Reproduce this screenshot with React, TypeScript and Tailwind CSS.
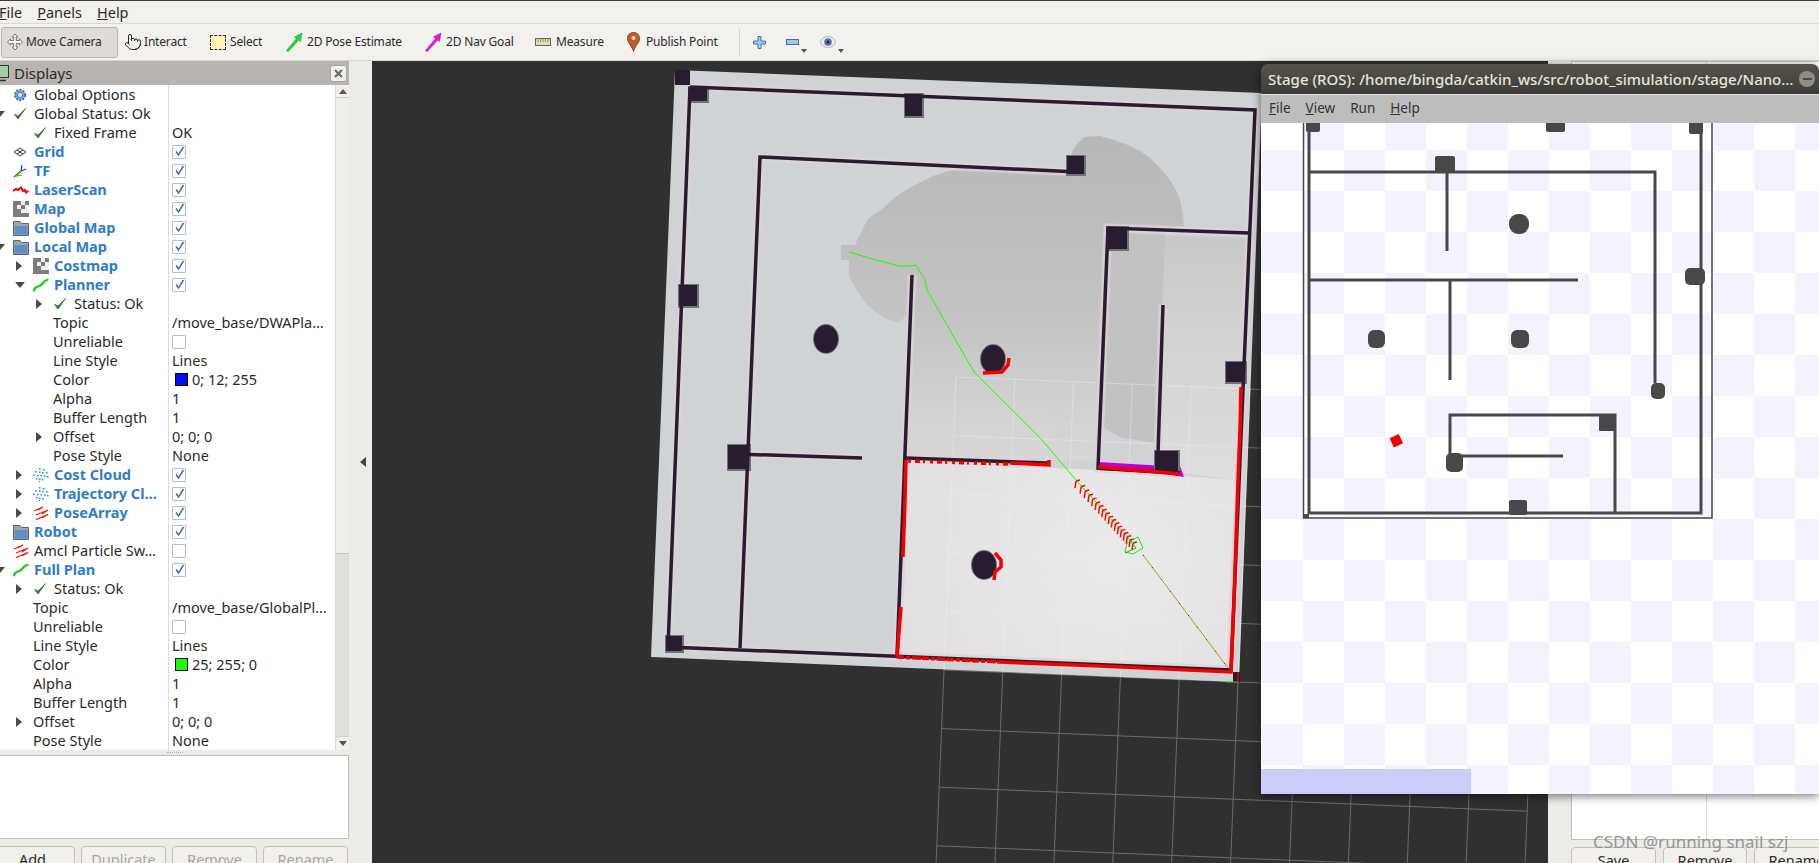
import { Pointer } from "lucide-react";

type Row = {
  text: string;
  level: number;
  arrow?: "right" | "down" | "dot";
  icon?: string;
  blue?: boolean;
  value?: string;
  check?: boolean;
  color?: string;
};

const rows: Row[] = [
  { text: "Global Options", level: 0, arrow: "dot", icon: "gear" },
  { text: "Global Status: Ok", level: 0, arrow: "down", icon: "ok" },
  { text: "Fixed Frame", level: 1, icon: "ok", value: "OK" },
  { text: "Grid", level: 0, arrow: "dot", icon: "grid", blue: true, check: true },
  { text: "TF", level: 0, arrow: "dot", icon: "tf", blue: true, check: true },
  { text: "LaserScan", level: 0, arrow: "dot", icon: "laser", blue: true, check: true },
  { text: "Map", level: 0, arrow: "dot", icon: "map", blue: true, check: true },
  { text: "Global Map", level: 0, arrow: "dot", icon: "folder", blue: true, check: true },
  { text: "Local Map", level: 0, arrow: "down", icon: "folder", blue: true, check: true },
  { text: "Costmap", level: 1, arrow: "right", icon: "map", blue: true, check: true },
  { text: "Planner", level: 1, arrow: "down", icon: "path", blue: true, check: true },
  { text: "Status: Ok", level: 2, arrow: "right", icon: "ok" },
  { text: "Topic", level: 2, value: "/move_base/DWAPla…" },
  { text: "Unreliable", level: 2, check: false },
  { text: "Line Style", level: 2, value: "Lines" },
  { text: "Color", level: 2, value: "0; 12; 255", color: "bg-[#000cff]" },
  { text: "Alpha", level: 2, value: "1" },
  { text: "Buffer Length", level: 2, value: "1" },
  { text: "Offset", level: 2, arrow: "right", value: "0; 0; 0" },
  { text: "Pose Style", level: 2, value: "None" },
  { text: "Cost Cloud", level: 1, arrow: "right", icon: "cloud", blue: true, check: true },
  { text: "Trajectory Cl…", level: 1, arrow: "right", icon: "cloud", blue: true, check: true },
  { text: "PoseArray", level: 1, arrow: "right", icon: "pose", blue: true, check: true },
  { text: "Robot", level: 0, arrow: "dot", icon: "folder", blue: true, check: true },
  { text: "Amcl Particle Sw…", level: 0, arrow: "dot", icon: "pose", check: false },
  { text: "Full Plan", level: 0, arrow: "down", icon: "path", blue: true, check: true },
  { text: "Status: Ok", level: 1, arrow: "right", icon: "ok" },
  { text: "Topic", level: 1, value: "/move_base/GlobalPl…" },
  { text: "Unreliable", level: 1, check: false },
  { text: "Line Style", level: 1, value: "Lines" },
  { text: "Color", level: 1, value: "25; 255; 0", color: "bg-[#19ff00]" },
  { text: "Alpha", level: 1, value: "1" },
  { text: "Buffer Length", level: 1, value: "1" },
  { text: "Offset", level: 1, arrow: "right", value: "0; 0; 0" },
  { text: "Pose Style", level: 1, value: "None" },
];

const levelClass = ["ml-[-9px]", "ml-[11px]", "ml-[31px]"];

function TreeIcon({ name }: { name: string }) {
  if (name === "ok")
    return (
      <svg width="14" height="14" viewBox="0 0 14 14">
        <path d="M1.5 7.5 L5 12 L12.5 1.5 L5.2 9 Z" fill="#2a7a2c" stroke="#2a7a2c" strokeWidth="0.8" />
      </svg>
    );
  if (name === "gear")
    return (
      <svg width="14" height="14" viewBox="0 0 14 14">
        <circle cx="7" cy="7" r="5" fill="#8fb4e3" stroke="#3f78c4" strokeWidth="2.4" strokeDasharray="2 1.2" />
        <circle cx="7" cy="7" r="2.6" fill="#dfe9f6" stroke="#3f78c4" strokeWidth="1" />
      </svg>
    );
  if (name === "grid")
    return (
      <svg width="14" height="14" viewBox="0 0 14 14" fill="none" stroke="#3d3d3d" strokeWidth="1">
        <path d="M7 3 L13 7 L7 11 L1 7 Z M4 5 L10 9 M10 5 L4 9" />
      </svg>
    );
  if (name === "tf")
    return (
      <svg width="14" height="14" viewBox="0 0 14 14" fill="none" strokeWidth="1.2">
        <path d="M8 7 L1 13" stroke="#ee1111" />
        <path d="M8 7 L4 12 L9 11" stroke="#11dd11" />
        <path d="M8 7 L9 1 M8 7 L13 5" stroke="#2222dd" />
      </svg>
    );
  if (name === "laser")
    return (
      <svg width="16" height="14" viewBox="0 0 16 14" fill="none" stroke="#f00000" strokeWidth="2">
        <path d="M0 8 L3 6 L5 7 L8 4.5 L10 8 L12 7 L13 9.5 L15.5 8" />
      </svg>
    );
  if (name === "map")
    return (
      <svg width="16" height="16" viewBox="0 0 16 16">
        <rect width="16" height="16" fill="#f0f0f0" />
        <path d="M0 0h8v4h-8z M12 0h4v4h-4z M0 4h4v4h-4z M8 4h4v4h-4z M0 8h8v4h-8z M0 12h8v4h-8z M8 12h8v4h-8z" fill="#7c7c7c" />
      </svg>
    );
  if (name === "folder")
    return (
      <svg width="16" height="16" viewBox="0 0 16 16">
        <path d="M0.5 1.5 H7 L8.5 3.5 H15.5 V15.5 H0.5 Z" fill="#9aa4ad" stroke="#5c6670" />
        <rect x="1.5" y="6" width="13" height="8.5" fill="#5c8fc9" />
      </svg>
    );
  if (name === "path")
    return (
      <svg width="16" height="14" viewBox="0 0 16 14" fill="none" stroke="#16d016" strokeWidth="2.2" strokeLinecap="round">
        <path d="M1 12.5 C2 7 6 10 9 6 C10.5 4 12 2.5 14.5 1.8" />
      </svg>
    );
  if (name === "cloud")
    return (
      <svg width="16" height="14" viewBox="0 0 16 14" fill="#1b8fe8">
        <path d="M6 0h1.6v1.6H6z M10 1h1.6v1.6H10z M2 3h1.6v1.6H2z M6 3.5h1.6v1.6H6z M9 4h1.6v1.6H9z M13 4h1.6v1.6H13z M0 6.500h1.6v1.6H0z M4 7h1.6v1.600H4z M7.500 7h1.6v1.6h-1.6z M11 7.500h1.6v1.600H11z M14 8h1.600v1.600H14z M3 10h1.600v1.600H3z M6 10.500h1.600v1.600H6z M9 11h1.600v1.600H9z M6 13h1v1H6z" />
      </svg>
    );
  return (
    <svg width="16" height="14" viewBox="0 0 16 14" fill="none" stroke="#ee1c10" strokeWidth="1.3">
      <path d="M1 5 L10 1 L5 4 M3 9 L15 4 L9 8 M3 13.500 L15 8.500 L9 12" />
    </svg>
  );
}

function Arrow({ kind }: { kind?: Row["arrow"] }) {
  if (kind === "right")
    return <span className="ml-[5px] h-0 w-0 border-y-[5px] border-l-[6px] border-y-transparent border-l-[#4a4a4a]" />;
  if (kind === "down")
    return <span className="ml-[4px] h-0 w-0 border-x-[5px] border-t-[6px] border-x-transparent border-t-[#4a4a4a]" />;
  if (kind === "dot") return <span className="ml-[7px] h-[2px] w-[2px] bg-[#777]" />;
  return null;
}

function CheckBox({ on }: { on: boolean }) {
  return (
    <span className="flex h-[14px] w-[14px] items-center justify-center rounded-[1px] border border-[#bdbdbd] bg-white">
      {on && (
        <svg width="11" height="11" viewBox="0 0 11 11" fill="none" stroke="#2f73b8" strokeWidth="1.5">
          <path d="M2 5.500 L4.500 9 L9.500 1" />
        </svg>
      )}
    </span>
  );
}

function TreeRow({ row }: { row: Row }) {
  return (
    <div className="flex h-[19px] shrink-0 items-center">
      <div className="flex h-full w-[169px] shrink-0 items-center overflow-hidden border-r border-[#dcdcdc]">
        <div className={`flex shrink-0 items-center ${levelClass[row.level]}`}>
          <span className="flex w-[22px] shrink-0 items-center">
            <Arrow kind={row.arrow} />
          </span>
          {row.icon && (
            <span className="flex w-[21px] shrink-0 items-center">
              <TreeIcon name={row.icon} />
            </span>
          )}
          <span className={`whitespace-nowrap ${row.blue ? "font-bold text-[#2f7ccb]" : "text-[#2b2b2b]"}`}>{row.text}</span>
        </div>
      </div>
      <div className="flex items-center whitespace-nowrap pl-[3px] text-[#2b2b2b]">
        {row.check !== undefined && <CheckBox on={row.check} />}
        {row.color && <span className={`ml-[3px] mr-[4px] h-[13px] w-[13px] border border-black ${row.color}`} />}
        {row.value}
      </div>
    </div>
  );
}

function PanelButton({ label, width, disabled }: { label: string; width: string; disabled?: boolean }) {
  return (
    <div
      className={`flex h-[27px] shrink-0 items-center justify-center rounded-[4px] border border-[#c4c1bc] bg-[#f2f0ed] ${width} ${disabled ? "text-[#a8a6a2]" : "text-[#2b2b2b]"}`}
    >
      {label}
    </div>
  );
}

function Tool({ width, icon, label }: { width: string; icon: React.ReactNode; label: string }) {
  return (
    <div className={`flex shrink-0 items-center ${width}`}>
      {icon}
      <span className="whitespace-nowrap text-[12px] tracking-[-0.18px] text-[#2b2b2b]">{label}</span>
    </div>
  );
}

function ArrowIcon({ color, dark }: { color: string; dark: string }) {
  return (
    <svg className="mr-[4px]" width="17" height="20" viewBox="0 0 17 20">
      <path d="M0.500 18.500 L10.500 6.500 L8.500 5 L16 1 L14.500 9.500 L12.800 8 L2 19.800 Z" fill={color} stroke={dark} strokeWidth="0.5" />
    </svg>
  );
}

const gridLines = (() => {
  const lines: number[][] = [];
  const p = (i: number, j: number) => [956 + i * 58.8 - j * 2.4, 377 + i * 2.4 + j * 58.6];
  for (let i = 0; i <= 10; i++) lines.push([...p(i, 0), ...p(i, 10)]);
  for (let j = 0; j <= 10; j++) lines.push([...p(0, j), ...p(10, j)]);
  return lines;
})();

const walls = [
  "690,87 1255,110 1231,670 668,647 690,87",
  "740,648 760,157 1078,172",
  "912,275 897,657",
  "905,458 1048,463",
  "736,454 862,458",
  "1249,233 1108,228 1098,468 1180,473",
  "1163,305 1158,453",
];

const blocks = [
  [689, 87, 18, 14],
  [905, 94, 17, 22],
  [1067, 156, 17, 18],
  [679, 285, 18, 21],
  [1107, 227, 20, 22],
  [1226, 362, 19, 20],
  [728, 445, 21, 24],
  [1155, 451, 23, 20],
  [666, 636, 16, 15],
];

const rounds = [
  [826, 339, 12, 14],
  [993, 359, 12, 14],
  [984, 565, 12, 14],
];

const redLines = [
  "1241,387 1240,430 1238,480 1236,540 1234,600 1231,672 1100,666 1000,662",
  "901,607 897,657",
  "906,460 905,500 903,557",
  "1010,463 1049,465 1049,460",
  "1098,467 1180,474",
  "1009,358 1008,365 1002,372 983,373",
  "995,553 1001,560 1001,567 995,572 994,580",
];

const stageWalls = [
  "1309,123 1309,513 1701,513 1701,123",
  "1309,172 1655,172 1655,383",
  "1447,172 1447,251",
  "1309,280 1578,280",
  "1450,280 1450,380",
  "1450,457 1450,415 1615,415 1615,513",
  "1450,456 1563,456",
];

const stageBlocks = [
  [1306, 120, 14, 12, 2],
  [1546, 120, 19, 12, 2],
  [1689, 120, 14, 14, 2],
  [1435, 156, 20, 17, 2],
  [1685, 268, 20, 17, 5],
  [1651, 383, 14, 16, 5],
  [1368, 330, 17, 18, 6],
  [1511, 330, 18, 18, 6],
  [1509, 214, 20, 20, 9],
  [1446, 453, 17, 19, 5],
  [1599, 415, 17, 16, 1],
  [1509, 500, 18, 15, 2],
  [1303, 514, 6, 4, 0],
];

function Viewport3D() {
  const ticks = Array.from({ length: 18 }, (_, k) => {
    const t = Math.pow(k / 17, 0.85);
    return [1076 + t * 57, 481 + t * 62];
  });
  return (
    <svg className="block h-full w-full" viewBox="372 61 1176 802" preserveAspectRatio="none">
      <defs>
        <clipPath id="mapClip">
          <polygon points="675,70 1262,93 1239,682 651,657" />
        </clipPath>
        <linearGradient id="blobFill" x1="0" y1="0" x2="0" y2="1">
          <stop offset="0" stopColor="#b8b8b8" />
          <stop offset="0.55" stopColor="#c4c3c4" />
          <stop offset="1" stopColor="#d9d7d8" />
        </linearGradient>
        <linearGradient id="sideFill" x1="0" y1="0" x2="0" y2="1">
          <stop offset="0" stopColor="#c9c8c9" />
          <stop offset="1" stopColor="#e0dfe0" />
        </linearGradient>
        <radialGradient id="lightFill" gradientUnits="userSpaceOnUse" cx="1110" cy="560" r="300">
          <stop offset="0" stopColor="#ebeaeb" />
          <stop offset="0.7" stopColor="#e2e0e1" />
          <stop offset="1" stopColor="#d9d7d8" />
        </radialGradient>
      </defs>
      <rect x="372" y="61" width="1176" height="802" fill="#303030" />
      {gridLines.map((l, i) => (
        <line key={i} x1={l[0]} y1={l[1]} x2={l[2]} y2={l[3]} stroke="#6b6b6b" strokeWidth="1" />
      ))}
      <polygon points="675,70 1262,93 1239,682 651,657" fill="#d0d3d5" />
      <g clipPath="url(#mapClip)">
        <polygon
          points="841,245 855,245 858,238 861,233 867,220 873,215 881,210 891,201 901,193 911,187 921,182 933,176 945,172 961,168 1066,170 1072,152 1077,144 1084,137 1100,136 1114,140 1128,145 1140,151 1150,158 1161,169 1170,180 1176,190 1180,200 1183,214 1184,227 1108,228 1100,460 905,458 912,275 907,315 899,323 892,321 885,318 876,312 867,305 862,298 857,290 849,277 849,260 841,260"
          fill="url(#blobFill)"
        />
        <polygon points="1163,235 1250,238 1240,480 1156,470" fill="url(#sideFill)" />
        <polygon points="1108,232 1165,234 1158,443 1122,438 1102,427" fill="#c3c2c3" />
        <polygon points="906,462 1098,470 1180,476 1240,480 1232,670 897,657" fill="url(#lightFill)" />
        {gridLines.map((l, i) => (
          <line key={i} x1={l[0]} y1={l[1]} x2={l[2]} y2={l[3]} stroke="#f2f2f2" strokeWidth="1" opacity="0.4" />
        ))}
        {walls.map((w, i) => (
          <polyline key={i} points={w} fill="none" stroke="#dcd2d5" strokeWidth="9" opacity="0.75" />
        ))}
        <polygon points="1098,462 1165,466 1180,466 1184,477 1165,474 1098,470" fill="#c000c8" />
      </g>
      <rect x="675" y="70" width="15" height="15" fill="#2a1c30" />
      {blocks.map((b, i) => (
        <rect key={i} x={b[0] - 1} y={b[1] - 1} width={b[2] + 3} height={b[3] + 3} fill="#6f7478" />
      ))}
      {rounds.map((r, i) => (
        <ellipse key={i} cx={r[0]} cy={r[1]} rx={r[2] + 1} ry={r[3] + 1} fill="#6f7478" />
      ))}
      {walls.map((w, i) => (
        <polyline key={i} points={w} fill="none" stroke="#2a1c30" strokeWidth="3.500" />
      ))}
      {blocks.map((b, i) => (
        <rect key={i} x={b[0]} y={b[1]} width={b[2]} height={b[3]} fill="#2a1c30" />
      ))}
      {rounds.map((r, i) => (
        <ellipse key={i} cx={r[0]} cy={r[1]} rx={r[2]} ry={r[3]} fill="#2a1c30" />
      ))}
      {redLines.map((w, i) => (
        <polyline key={i} points={w} fill="none" stroke="#f50000" strokeWidth="3.500" />
      ))}
      <polyline points="908,461 1010,464" fill="none" stroke="#f50000" strokeWidth="3.500" strokeDasharray="3 4 5 3 2 5" />
      <polyline points="897,657 1000,662" fill="none" stroke="#f50000" strokeWidth="3.500" strokeDasharray="7 2 4 2 9 1" />
      <polyline
        points="849,252 869,258 899,266 911,266 916,265 925,280 927,290 967,360 975,373 1042,440 1076,480 1132,542"
        fill="none"
        stroke="#19ff00"
        strokeWidth="1"
      />
      {ticks.map((t, i) => (
        <path key={i} d={`M${t[0]} ${t[1]} l-1 7 M${t[0]} ${t[1]} l4 -1`} fill="none" stroke="#f40808" strokeWidth="1.5" />
      ))}
      <polygon points="1127,543 1138,537 1143,548 1133,554 1125,552" fill="none" stroke="#19e010" strokeWidth="1" />
      <polyline points="1125,553 1136,548 1129,539" fill="none" stroke="#10c010" strokeWidth="1" />
      <line x1="1143" y1="555" x2="1228" y2="668" stroke="#a3a33a" strokeWidth="1" />
      <line x1="1143" y1="555" x2="1228" y2="668" stroke="#222" strokeWidth="1" strokeDasharray="1 14" />
      <rect x="1233" y="672" width="7" height="10" fill="#2a1c30" />
      <path d="M1226 682 H1238" stroke="#19e010" strokeWidth="1" />
      <path d="M1238 682 V672" stroke="#f00000" strokeWidth="1.5" />
    </svg>
  );
}

function StageCanvas() {
  const cells: number[][] = [];
  for (let c = -1; c < 14; c++) {
    for (let r = -1; r < 17; r++) {
      if ((c + r) % 2 !== 0) cells.push([1303 + c * 41, 150 + r * 41]);
    }
  }
  return (
    <svg className="block h-[671px] w-full" viewBox="1261 123 558 671" preserveAspectRatio="none">
      <rect x="1261" y="123" width="558" height="671" fill="#ffffff" />
      {cells.map((c, i) => (
        <rect key={i} x={c[0]} y={c[1]} width="41" height="41" fill="#f3f3ff" />
      ))}
      <path d="M1303.500 123 V518 H1712 V123" fill="none" stroke="#484848" strokeWidth="1.500" />
      {stageWalls.map((w, i) => (
        <polyline key={i} points={w} fill="none" stroke="#484848" strokeWidth="3" />
      ))}
      {stageBlocks.map((b, i) => (
        <rect key={i} x={b[0]} y={b[1]} width={b[2]} height={b[3]} rx={b[4]} fill="#484848" />
      ))}
      <rect x="1391.500" y="435.500" width="10" height="10" fill="#f00000" transform="rotate(-25 1397 441)" />
      <rect x="1261" y="769" width="210" height="25" fill="#ccccfa" />
    </svg>
  );
}

export default function App() {
  return (
    <div className="relative flex h-[863px] w-[1819px] flex-col overflow-hidden bg-[#edebe6] font-['Noto_Sans',sans-serif] text-[14.5px] leading-none text-[#2b2b2b]">
      <div className="flex h-[23px] shrink-0 items-center gap-[15px] border-t border-[#3c3b37] bg-[#f2f1ed]">
        <span className="-ml-px"><u>F</u>ile</span>
        <span><u>P</u>anels</span>
        <span><u>H</u>elp</span>
      </div>
      <div className="flex h-[38px] shrink-0 items-center border-y border-[#d9d7d2] bg-[#f2f1ed] pl-px">
        <div className="mr-[6px] flex h-[31px] w-[117px] shrink-0 items-center rounded-[3px] border border-[#b8b6b1] bg-[#dfdcd8] pl-[5px]">
          <svg className="mr-[3px]" width="16" height="18" viewBox="0 0 16 18" fill="#f4f4f4" stroke="#777" strokeWidth="1">
            <path d="M8 1 L11 4 H9.300 V7.500 H12.500 V5.800 L15.500 9 L12.500 12.200 V10.500 H9.300 V14 H11 L8 17 L5 14 H6.700 V10.500 H3.500 V12.200 L0.500 9 L3.500 5.800 V7.500 H6.700 V4 H5 Z" />
          </svg>
          <span className="whitespace-nowrap text-[12px] tracking-[-0.18px]">Move Camera</span>
        </div>
        <Tool width="w-[86px]" label="Interact" icon={<Pointer className="mr-[2px]" size={18} strokeWidth={1.3} color="#222" />} />
        <Tool
          width="w-[76px]"
          label="Select"
          icon={<span className="mr-[4px] h-[15px] w-[16px] border border-dashed border-[#333] bg-[#fbf6b6]" />}
        />
        <Tool width="w-[139px]" label="2D Pose Estimate" icon={<ArrowIcon color="#19e040" dark="#0c8a28" />} />
        <Tool width="w-[110px]" label="2D Nav Goal" icon={<ArrowIcon color="#f010e0" dark="#a008a0" />} />
        <Tool
          width="w-[92px]"
          label="Measure"
          icon={
            <svg className="mr-[5px]" width="16" height="8" viewBox="0 0 16 8">
              <rect x="0.500" y="0.500" width="15" height="7" fill="#e6dcae" stroke="#666" />
              <path d="M3 1v3 M5.500 1v3 M8 1v3 M10.500 1v3 M13 1v3" stroke="#777" strokeWidth="0.8" />
            </svg>
          }
        />
        <Tool
          width="w-[112px]"
          label="Publish Point"
          icon={
            <svg className="mr-[6px]" width="13" height="20" viewBox="0 0 13 20">
              <path d="M6.500 0.500 C10 0.500 12.500 3 12.500 6.500 C12.500 10.500 8 14 6.500 19.500 C5 14 0.500 10.500 0.500 6.500 C0.500 3 3 0.500 6.500 0.500 Z" fill="#c9582a" stroke="#7a4a2a" />
              <circle cx="6.500" cy="6" r="2" fill="#f6d9c0" />
            </svg>
          }
        />
        <span className="mr-[13px] h-[27px] w-px bg-[#d4d2cd]" />
        <svg className="mr-[20px]" width="13" height="13" viewBox="0 0 13 13" fill="#a8c6ea" stroke="#3a74b8">
          <path d="M5 0.500 H8 V5 H12.500 V8 H8 V12.500 H5 V8 H0.500 V5 H5 Z" />
        </svg>
        <svg className="mr-[2px]" width="13" height="6" viewBox="0 0 13 6" fill="#a8c6ea" stroke="#3a74b8">
          <rect x="0.500" y="0.500" width="12" height="5" />
        </svg>
        <span className="mr-[13px] mt-[17px] h-0 w-0 border-x-[3px] border-t-[4px] border-x-transparent border-t-[#555]" />
        <svg className="mr-[2px]" width="16" height="14" viewBox="0 0 16 14">
          <ellipse cx="8" cy="7" rx="7.500" ry="5.500" fill="#e8eaee" stroke="#b8bcc4" />
          <circle cx="8" cy="7" r="3.800" fill="#5d74b0" />
          <circle cx="8" cy="7" r="1.500" fill="#20283c" />
        </svg>
        <span className="mt-[17px] h-0 w-0 border-x-[3px] border-t-[4px] border-x-transparent border-t-[#555]" />
      </div>
      <div className="flex min-h-0 flex-1">
        <div className="flex w-[349px] shrink-0 flex-col">
          <div className="flex h-[24px] shrink-0 items-center justify-between bg-[#b8b4b0] pr-[2px] text-[15px]">
            <div className="flex items-center">
              <svg className="-ml-[3px] mr-[5px]" width="12" height="17" viewBox="0 0 12 17">
                <rect x="0.500" y="0.500" width="11" height="12" fill="#9fd0a8" stroke="#333" />
                <path d="M3 15.500 H9" stroke="#333" strokeWidth="1.500" />
              </svg>
              Displays
            </div>
            <div className="flex h-[17px] w-[17px] items-center justify-center rounded-[3px] border border-[#a8a6a2] bg-[#f0efec]">
              <svg width="9" height="9" viewBox="0 0 9 9" stroke="#6a6a6a" strokeWidth="2.200">
                <path d="M1 1 L8 8 M8 1 L1 8" />
              </svg>
            </div>
          </div>
          <div className="flex h-[665px] shrink-0 overflow-hidden bg-white">
            <div className="flex w-[335px] shrink-0 flex-col overflow-hidden">
              {rows.map((row, i) => (
                <TreeRow key={i} row={row} />
              ))}
            </div>
            <div className="flex w-[14px] shrink-0 flex-col border-l border-[#dcdad6] bg-[#dfdfdc]">
              <div className="flex h-[13px] shrink-0 items-center justify-center border-b border-[#d0cec9] bg-[#f2f0ed]">
                <span className="h-0 w-0 border-x-[4px] border-b-[5px] border-x-transparent border-b-[#555]" />
              </div>
              <div className="h-[456px] shrink-0 border-b border-[#c8c6c2] bg-[#f0eeeb]" />
              <div className="flex-1" />
              <div className="flex h-[14px] shrink-0 items-center justify-center border-t border-[#d0cec9] bg-[#f2f0ed]">
                <span className="h-0 w-0 border-x-[4px] border-t-[5px] border-x-transparent border-t-[#555]" />
              </div>
            </div>
          </div>
          <div className="flex h-[5px] shrink-0 items-center justify-center">
            <span className="w-[16px] border-t border-dotted border-[#b0aea9]" />
          </div>
          <div className="h-[84px] shrink-0 border border-l-0 border-[#c2c0bb] bg-white" />
          <div className="mt-[7px] flex">
            <div className="-ml-[10px] flex gap-[6px]">
              <PanelButton label="Add" width="w-[85px]" />
              <PanelButton label="Duplicate" width="w-[85px]" disabled />
              <PanelButton label="Remove" width="w-[85px]" disabled />
              <PanelButton label="Rename" width="w-[85px]" disabled />
            </div>
          </div>
        </div>
        <div className="flex w-[23px] shrink-0 items-center pl-[11px]">
          <span className="h-0 w-0 border-y-[5px] border-r-[6px] border-y-transparent border-r-[#444]" />
        </div>
        <div className="min-w-0 flex-1">
          <Viewport3D />
        </div>
        <div className="flex w-[271px] shrink-0 flex-col pl-[23px]">
          <div className="flex flex-1 border border-r-0 border-[#c2c0bb] bg-white">
            <div className="w-[135px] border-r border-[#dcdcdc]" />
          </div>
          <div className="mt-[7px] flex h-[16px] gap-[7px] overflow-visible">
            <PanelButton label="Save" width="w-[85px]" />
            <PanelButton label="Remove" width="w-[84px]" />
            <div className="w-[64px] shrink-0 overflow-hidden">
              <PanelButton label="Rename" width="w-[85px]" />
            </div>
          </div>
        </div>
      </div>

      {/* stage window sits over rviz */}
      <div className="absolute left-[1261px] top-[64px] w-[558px] overflow-hidden rounded-t-[7px] shadow-[0_2px_10px_rgba(0,0,0,0.55)]">
        <div className="flex h-[30px] items-center justify-between bg-linear-to-b from-[#56544d] to-[#3e3c38] pl-[7px] pr-[4px] text-[15px] font-medium text-[#e6e4dc]">
          <span className="whitespace-nowrap">Stage (ROS): /home/bingda/catkin_ws/src/robot_simulation/stage/Nano…</span>
          <span className="flex h-[16px] w-[16px] items-center justify-center rounded-full bg-[#8f8d85]">
            <span className="h-[2px] w-[9px] bg-[#4a4842]" />
          </span>
        </div>
        <div className="flex h-[29px] items-center gap-[15px] border-t border-[#e4e4e4] bg-[#bdbdbd] pl-[8px] text-[13.5px] text-[#333]">
          <span><u>F</u>ile</span>
          <span><u>V</u>iew</span>
          <span>Run</span>
          <span><u>H</u>elp</span>
        </div>
        <StageCanvas />
      </div>
      <span className="absolute left-[1593px] top-[833px] whitespace-nowrap text-[17px] text-[#8a8a8a]/90">CSDN @running snail szj</span>
    </div>
  );
}
